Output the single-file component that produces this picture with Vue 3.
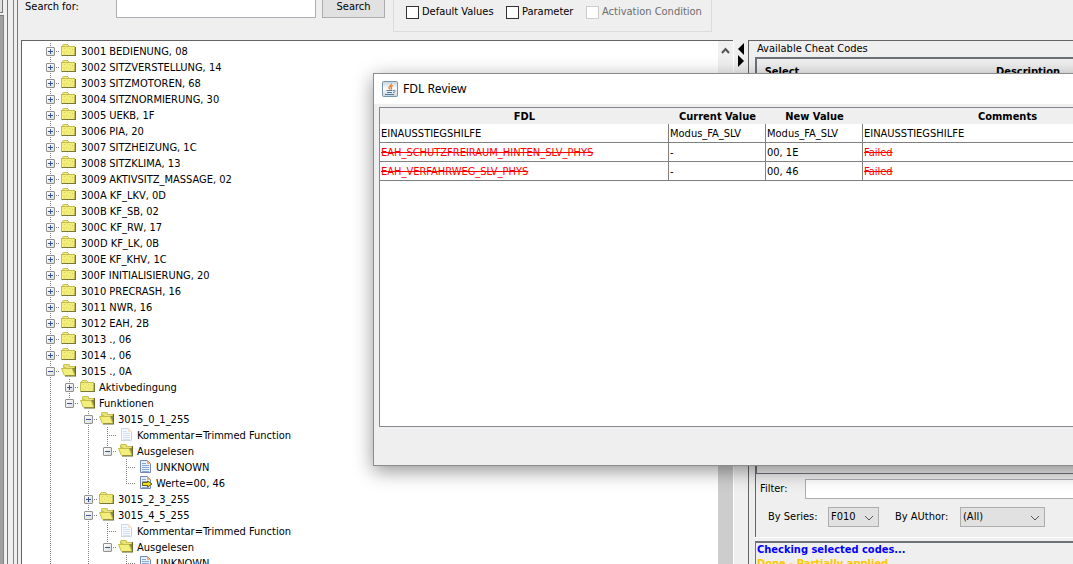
<script setup>
const closed = [
  '3001 BEDIENUNG, 08', '3002 SITZVERSTELLUNG, 14', '3003 SITZMOTOREN, 68',
  '3004 SITZNORMIERUNG, 30', '3005 UEKB, 1F', '3006 PIA, 20', '3007 SITZHEIZUNG, 1C',
  '3008 SITZKLIMA, 13', '3009 AKTIVSITZ_MASSAGE, 02', '300A KF_LKV, 0D', '300B KF_SB, 02',
  '300C KF_RW, 17', '300D KF_LK, 0B', '300E KF_KHV, 1C', '300F INITIALISIERUNG, 20',
  '3010 PRECRASH, 16', '3011 NWR, 16', '3012 EAH, 2B', '3013 ., 06', '3014 ., 06'
].map((text) => ({ text, guides: '', toggle: '+', end: false, icon: 'folder' }))

// guides: one character per ancestor level, "|" draws its line and "." leaves it empty
const nodes = [
  ...closed,
  { text: '3015 ., 0A', guides: '', toggle: '-', icon: 'open' },
  { text: 'Aktivbedingung', guides: '|', toggle: '+', icon: 'folder' },
  { text: 'Funktionen', guides: '|', toggle: '-', end: true, icon: 'open' },
  { text: '3015_0_1_255', guides: '|.', toggle: '-', icon: 'open' },
  { text: 'Kommentar=Trimmed Function', guides: '|.|', icon: 'faded' },
  { text: 'Ausgelesen', guides: '|.|', toggle: '-', end: true, icon: 'open' },
  { text: 'UNKNOWN', guides: '|.|.', icon: 'page' },
  { text: 'Werte=00, 46', guides: '|.|.', end: true, icon: 'value' },
  { text: '3015_2_3_255', guides: '|.', toggle: '+', icon: 'folder' },
  { text: '3015_4_5_255', guides: '|.', toggle: '-', icon: 'open' },
  { text: 'Kommentar=Trimmed Function', guides: '|.|', icon: 'faded' },
  { text: 'Ausgelesen', guides: '|.|', toggle: '-', end: true, icon: 'open' },
  { text: 'UNKNOWN', guides: '|.|.', icon: 'page' }
]

const rows = [
  { fdl: 'EINAUSSTIEGSHILFE', current: 'Modus_FA_SLV', next: 'Modus_FA_SLV', comment: 'EINAUSSTIEGSHILFE' },
  { fdl: 'EAH_SCHUTZFREIRAUM_HINTEN_SLV_PHYS', current: '-', next: '00, 1E', comment: 'Failed', failed: true },
  { fdl: 'EAH_VERFAHRWEG_SLV_PHYS', current: '-', next: '00, 46', comment: 'Failed', failed: true }
]
</script>

<template>
  <div class="app">
    <div class="rail">
      <div class="rail-outer"><i class="rail-cap"></i><i class="rail-body"></i></div>
      <i class="rail-a"></i>
      <i class="rail-b"></i>
    </div>

    <main class="main">
      <header class="toolbar">
        <form class="search" @submit.prevent>
          <label for="search">Search for:</label>
          <input id="search" type="text" />
          <button type="submit">Search</button>
        </form>
        <div class="options">
          <label class="opt-default"><input type="checkbox" />Default Values</label>
          <label class="opt-param"><input type="checkbox" />Parameter</label>
          <label class="disabled"><input type="checkbox" disabled />Activation Condition</label>
        </div>
      </header>

      <div class="split">
        <section class="tree-pane">
          <div class="tree">
            <div v-for="(n, i) in nodes" :key="i" class="node">
              <i v-for="(g, j) in n.guides" :key="j" class="guide" :class="{ line: g === '|' }"></i>
              <span class="joint" :class="{ end: n.end }">
                <button v-if="n.toggle" type="button" class="toggle" :class="{ plus: n.toggle === '+' }" :aria-label="n.toggle === '+' ? 'Expand' : 'Collapse'"></button>
              </span>
              <svg v-if="n.icon === 'folder'" class="icon" viewBox="0 0 16 16" shape-rendering="crispEdges">
                <path d="M0 3h1V2h1V1h5v1h1v1h6v10H0z" fill="#c3bf56" />
                <path d="M2 2h5v1H2zM1 4h12v8H1z" fill="#f1ed7d" />
                <path d="M3 5h1v1H3zM8 5h1v1H8zM11 6h1v1h-1zM5 8h1v1H5zM9 9h1v1H9zM3 10h1v1H3zM12 10h1v1h-1z" fill="#d8d459" />
                <path d="M14 4h1v9H1v-1h13z" fill="#77763b" />
              </svg>
              <svg v-else-if="n.icon === 'open'" class="icon" viewBox="0 0 16 16">
                <path d="M2 4V2l1-1h5l1 1v1h5v9H5z" fill="#c9c34d" />
                <path d="M3 3V2h5v2h5v7z" fill="#e9e47a" />
                <path d="M14 3h1v10h-1z" fill="#68672f" />
                <path d="M11 5l3 7V5z" fill="#8b893f" />
                <path d="M.5 5.500h9.500q1 0 1.500 1l2.500 6H4.500q-1 0-1.500-1z" fill="#f3ef7d" stroke="#c3bd48" />
                <path d="M4 13h11" stroke="#68672f" />
              </svg>
              <svg v-else class="icon" :class="{ faded: n.icon === 'faded' }" viewBox="0 0 16 16">
                <path d="M3.500 1.500h7l3 3v9h-10z" fill="#e7f0fc" stroke="#7188b4" />
                <path d="M10 1v4h4z" fill="#e3b574" />
                <path d="M5 4.500h4M5 6.500h7M5 8.500h7M5 10.500h7M5 12.500h7" stroke="#8ba5d4" />
                <path v-if="n.icon === 'value'" d="M5.500 7.500h5v-1.500l4.500 3-4.500 3v-1.500h-5z" fill="#f5dd20" stroke="#655c1c" />
              </svg>
              <span class="text">{{ n.text }}</span>
            </div>
          </div>
          <div class="scrollbar">
            <button type="button" aria-label="Scroll up">
              <svg viewBox="0 0 15 16"><path d="M4 11l3.500-4 3.500 4" fill="none" stroke="#555" stroke-width="2" /></svg>
            </button>
            <i class="thumb"></i>
          </div>
        </section>

        <div class="divider">
          <button type="button" aria-label="Collapse left"><svg viewBox="0 0 6 12"><path d="M6 0v12L0 6z" /></svg></button>
          <button type="button" aria-label="Collapse right"><svg viewBox="0 0 6 12"><path d="M0 0v12l6-6z" /></svg></button>
        </div>

        <section class="side">
          <div class="codes">
            <h2>Available Cheat Codes</h2>
            <div class="codes-list">
              <table>
                <colgroup><col class="c-select" /><col /></colgroup>
                <thead><tr><th>Select</th><th>Description</th></tr></thead>
              </table>
            </div>
            <div class="filters">
              <div class="filter"><label for="filter">Filter:</label><input id="filter" type="text" /></div>
              <div class="picks">
                <label for="series">By Series:</label>
                <span class="select series">
                  <select id="series"><option>F010</option></select>
                  <svg viewBox="0 0 10 6"><path d="M1 1l4 4 4-4" /></svg>
                </span>
                <label for="author">By AUthor:</label>
                <span class="select author">
                  <select id="author"><option>(All)</option></select>
                  <svg viewBox="0 0 10 6"><path d="M1 1l4 4 4-4" /></svg>
                </span>
              </div>
            </div>
          </div>
          <div class="log">
            <p class="info">Checking selected codes...</p>
            <p class="warn">Done - Partially applied</p>
          </div>
        </section>
      </div>
    </main>

    <section class="dialog" role="dialog" aria-labelledby="dialog-title">
      <header>
        <svg viewBox="0 0 16 16">
          <defs><linearGradient id="cup-bg" x1="0" y1="0" x2="0" y2="1"><stop offset="0" stop-color="#c3d4e0" /><stop offset=".5" stop-color="#fff" /><stop offset="1" stop-color="#c3d2dd" /></linearGradient></defs>
          <rect x=".5" y=".5" width="15" height="15" rx="1" fill="url(#cup-bg)" stroke="#7794aa" />
          <path d="M9.500 2.500c.500 2-3 2.500-2.500 4.500.200.800 1 .700 1 1.500M11 4.500c-2 .800-2.500 1.500-1.500 2.500.300.600 0 1-.500 1.500" fill="none" stroke="#ee7d1e" stroke-width="1.300" />
          <path d="M4.500 9.500h6M5 11.500h5M3 13.500h9M11 9.500c3-1 3 1.500 0 2" fill="none" stroke="#587b98" />
        </svg>
        <h1 id="dialog-title">FDL Review</h1>
      </header>
      <div class="review">
        <table>
          <colgroup><col /><col class="c-value" /><col class="c-value" /><col /></colgroup>
          <thead><tr><th>FDL</th><th>Current Value</th><th>New Value</th><th>Comments</th></tr></thead>
          <tbody>
            <tr v-for="r in rows" :key="r.fdl">
              <td><s v-if="r.failed">{{ r.fdl }}</s><template v-else>{{ r.fdl }}</template></td>
              <td>{{ r.current }}</td>
              <td>{{ r.next }}</td>
              <td><s v-if="r.failed">{{ r.comment }}</s><template v-else>{{ r.comment }}</template></td>
            </tr>
          </tbody>
        </table>
      </div>
    </section>
  </div>
</template>

<style>
body { margin: 0; overflow: hidden; background: #efefef; }
</style>

<style scoped>
* { box-sizing: border-box; }
.app {
  position: relative; display: flex; height: 100vh; overflow: hidden;
  background: #efefef; color: #000; white-space: nowrap;
  font: 11px/16px "DejaVu Sans Condensed", Tahoma, "Noto Sans", sans-serif;
}
input, button, select { font: inherit; color: inherit; margin: 0; padding: 0; border-radius: 0; }
h1, h2, p { margin: 0; font-size: inherit; }
h1, h2 { font-weight: normal; }
svg { display: block; }
table { width: 100%; table-layout: fixed; border-collapse: separate; border-spacing: 0; }
th { padding: 0; }

.rail { flex: none; display: flex; width: 18px; margin-right: 3px; }
.rail-outer { display: flex; flex-direction: column; width: 8px; border-right: 1px solid #777; gap: 2px; }
.rail-cap { width: 3px; height: 13px; border: solid #777; border-width: 0 1px 1px 0; background: #e1e1e1; }
.rail-body { flex: 1; width: 4px; background: #a0a0a0; border-top: 1px solid #777; border-right: 1px solid #858585; }
.rail-a { width: 6px; border-right: 1px solid #7c8090; }
.rail-b { width: 4px; border-right: 1px solid #777; }

.main { flex: 1; min-width: 0; display: flex; flex-direction: column; }
.toolbar { flex: none; display: flex; align-items: flex-start; height: 40px; }
.search { display: flex; align-items: center; margin-top: -5px; }
.search label { width: 95px; padding-left: 4px; }
.search input { width: 200px; height: 22px; border: 1px solid #abadb3; background: #fff; }
.search button { width: 63px; height: 23px; margin-left: 6px; border: 1px solid #adadad; background: #e1e1e1; }
.options { display: flex; height: 32px; margin-left: 8px; padding: 4px 9px 0 12px; border: 1px solid #dcdcdc; border-top: 0; }
.options label { display: flex; align-items: center; height: 16px; gap: 3px; }
.options input { appearance: none; width: 13px; height: 13px; border: 1px solid #333; background: #fff; }
.opt-default { width: 100px; }
.opt-param { width: 80px; }
.options .disabled { color: #6d6d6d; }
.options .disabled input { border-color: #ccc; }

.split { flex: 1; min-height: 0; display: flex; }
.tree-pane { flex: 711; min-width: 0; display: flex; border: solid #646464; border-width: 1px 0 0 1px; background: #fff; }
.tree { flex: 1; min-width: 0; overflow: hidden; padding: 2px 0 0 19px; }
.node { display: flex; height: 16px; }
.text { line-height: 18px; }
.guide, .joint { position: relative; flex: none; width: 19px; height: 16px; }
.guide.line::before, .joint::before {
  content: ""; position: absolute; left: 9px; top: 0; width: 1px; height: 16px;
  background: repeating-linear-gradient(#808080 0 1px, transparent 1px 2px);
}
.joint.end::before { height: 8px; }
.joint::after {
  content: ""; position: absolute; left: 9px; right: 0; top: 8px; height: 1px;
  background: repeating-linear-gradient(90deg, #808080 0 1px, transparent 1px 2px);
}
.toggle {
  position: absolute; z-index: 1; left: 5px; top: 4px; width: 9px; height: 9px;
  border: 1px solid #919191; border-radius: 1px; background: linear-gradient(135deg, #fff, #dcdcdc);
}
.toggle::before, .toggle.plus::after { content: ""; position: absolute; left: 1px; top: 3px; width: 5px; height: 1px; background: #3a529c; }
.toggle.plus::after { left: 3px; top: 1px; width: 1px; height: 5px; }
.icon { flex: none; width: 16px; height: 16px; margin: 0 3px 0 1px; }
.node > .joint:first-child ~ .icon { margin-right: 4px; }
.icon.faded { opacity: .35; }

.scrollbar { flex: none; display: flex; flex-direction: column; width: 15px; background: #f0f0f0; }
.scrollbar button { height: 17px; border: 0; background: none; }
.thumb { flex: 1; margin-top: 60px; background: #cdcdcd; }

.divider { flex: none; width: 15px; padding: 3px 0 0 4px; border-left: 1px solid #fff; }
.divider button { display: block; width: 6px; height: 12px; border: 0; background: none; }

.side { flex: 318; min-width: 0; display: flex; flex-direction: column; padding-left: 6px; border: solid #646464; border-width: 1px 0 0 1px; }
.codes { flex: 1; min-height: 0; display: flex; flex-direction: column; border-bottom: 1px solid #fff; }
.codes h2 { height: 16px; padding-left: 2px; line-height: 15px; }
.codes-list { flex: 1; margin-right: -176px; border: solid #6e717a; border-width: 2px 0 1px 2px; }
.codes-list th { height: 26px; }
.c-select { width: 50px; }
.filters { border-left: 1px solid #646464; padding: 5px 0 10px 4px; }
.filter { display: flex; align-items: center; }
.filter label { width: 45px; }
.filter input { flex: 1; min-width: 0; height: 20px; border: 1px solid #abadb3; border-right: 0; background: #fff; }
.picks { display: flex; align-items: center; margin-top: 8px; padding-left: 8px; }
.picks label { width: 60px; }
.picks .series { margin-right: 16px; width: 51px; }
.picks .series + label { width: 65px; }
.select { position: relative; }
.select select { appearance: none; display: block; width: 100%; height: 20px; padding: 0 2px; border: 1px solid #adadad; background: #e1e1e1; }
.select svg { position: absolute; right: 5px; top: 8px; width: 10px; height: 6px; fill: none; stroke: #555; pointer-events: none; }
.author { width: 85px; }
.log { flex: none; height: 23px; margin-top: 3px; overflow: hidden; border: solid #6e717a; border-width: 2px 0 0 1px; font-weight: bold; line-height: 14px; }
.log p { padding-left: 1px; }
.info { color: #00f; }
.warn { color: #ffc800; }

.dialog {
  position: absolute; left: 373px; right: -86px; top: 73px; bottom: 98px; display: flex; flex-direction: column;
  border: 1px solid #8c8c8c; background: #efefef; box-shadow: 0 5px 18px rgba(0, 0, 0, .42);
}
.dialog header { flex: none; display: flex; align-items: center; gap: 5px; height: 30px; padding-left: 8px; background: #fff; }
.dialog header svg { width: 16px; height: 16px; }
.dialog h1 { font: 12px/16px "Noto Sans", sans-serif; }
.review { flex: 1; margin: 3px 5px 38px; border: 1px solid #828790; background: #fff; }
.c-value { width: 97px; }
.review th { height: 16px; padding-top: 1px; background: #efefef; line-height: 15px; }
.review td { height: 19px; padding: 2px 1px 0; border: solid #808080; border-width: 0 1px 1px 0; }
.review s { color: #f00; }
</style>
